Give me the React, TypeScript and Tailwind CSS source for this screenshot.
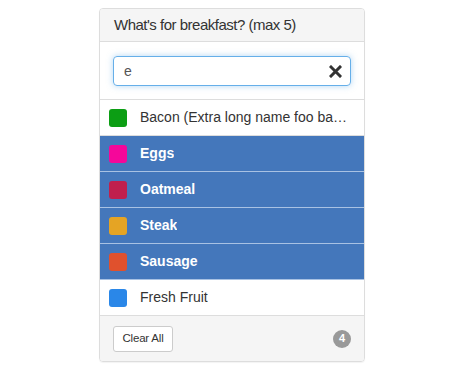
import React, { useState } from 'react';

interface Item {
  name: string;
  color: string;
  selected: boolean;
}

const items: Item[] = [
  { name: 'Bacon (Extra long name foo bar baz qux)', color: 'bg-[#0c9e14]', selected: false },
  { name: 'Eggs', color: 'bg-[#f5079a]', selected: true },
  { name: 'Oatmeal', color: 'bg-[#c01f4d]', selected: true },
  { name: 'Steak', color: 'bg-[#e5a424]', selected: true },
  { name: 'Sausage', color: 'bg-[#e0512d]', selected: true },
  { name: 'Fresh Fruit', color: 'bg-[#2a87e8]', selected: false },
];

export default function App() {
  const [query, setQuery] = useState('e');

  return (
    <div className="w-[474px] h-[371px] bg-white pt-[8px] pl-[99px] font-['Liberation_Sans',Arial,sans-serif] text-[#333]">
      <div className="w-[266px] border border-[#ddd] rounded-[4px] shadow-[0_1px_1px_rgba(0,0,0,0.05)] overflow-hidden">
        <div className="h-[33px] bg-[#f5f5f5] border-b border-[#ddd] px-[14px] flex items-center text-[15px] tracking-[-0.5px]">
          What's for breakfast? (max 5)
        </div>
        <div className="px-[13px] pt-[14px] pb-[13px] border-b border-[#ddd]">
          <div className="h-[30px] border border-[#66afe9] rounded-[4px] shadow-[0_0_6px_rgba(102,175,233,0.5)] flex items-center pl-[10px] pr-[8px]">
            <input
              value={query}
              onChange={(e) => setQuery(e.target.value)}
              className="flex-1 min-w-0 outline-none text-[14px] text-[#555] bg-transparent"
            />
            <svg width="13" height="13" viewBox="0 0 13 13">
              <path d="M2 2 L11 11 M11 2 L2 11" stroke="#333" strokeWidth="3" strokeLinecap="square" />
            </svg>
          </div>
        </div>
        {items.map((item, i) => (
          <div
            key={i}
            className={`h-[36px] flex items-center pl-[9px] pr-[14px] text-[14px] ${
              item.selected
                ? 'bg-[#4477bb] text-white font-bold border-b border-[#a9c2e3]'
                : 'bg-white text-[#333] border-b border-[#ddd]'
            }`}
          >
            <span className={`w-[18px] h-[18px] rounded-[3px] shrink-0 ${item.color}`} />
            <span className="ml-[13px] truncate">{item.name}</span>
          </div>
        ))}
        <div className="h-[45px] bg-[#f5f5f5] flex items-center justify-between pl-[13px] pr-[13px]">
          <button className="h-[26px] w-[60px] bg-white border border-[#ccc] rounded-[3px] text-[11.5px] tracking-[-0.2px] text-[#333]">
            Clear All
          </button>
          <span className="w-[18px] h-[18px] rounded-full bg-[#999] text-white text-[11px] font-bold flex items-center justify-center">
            4
          </span>
        </div>
      </div>
    </div>
  );
}
